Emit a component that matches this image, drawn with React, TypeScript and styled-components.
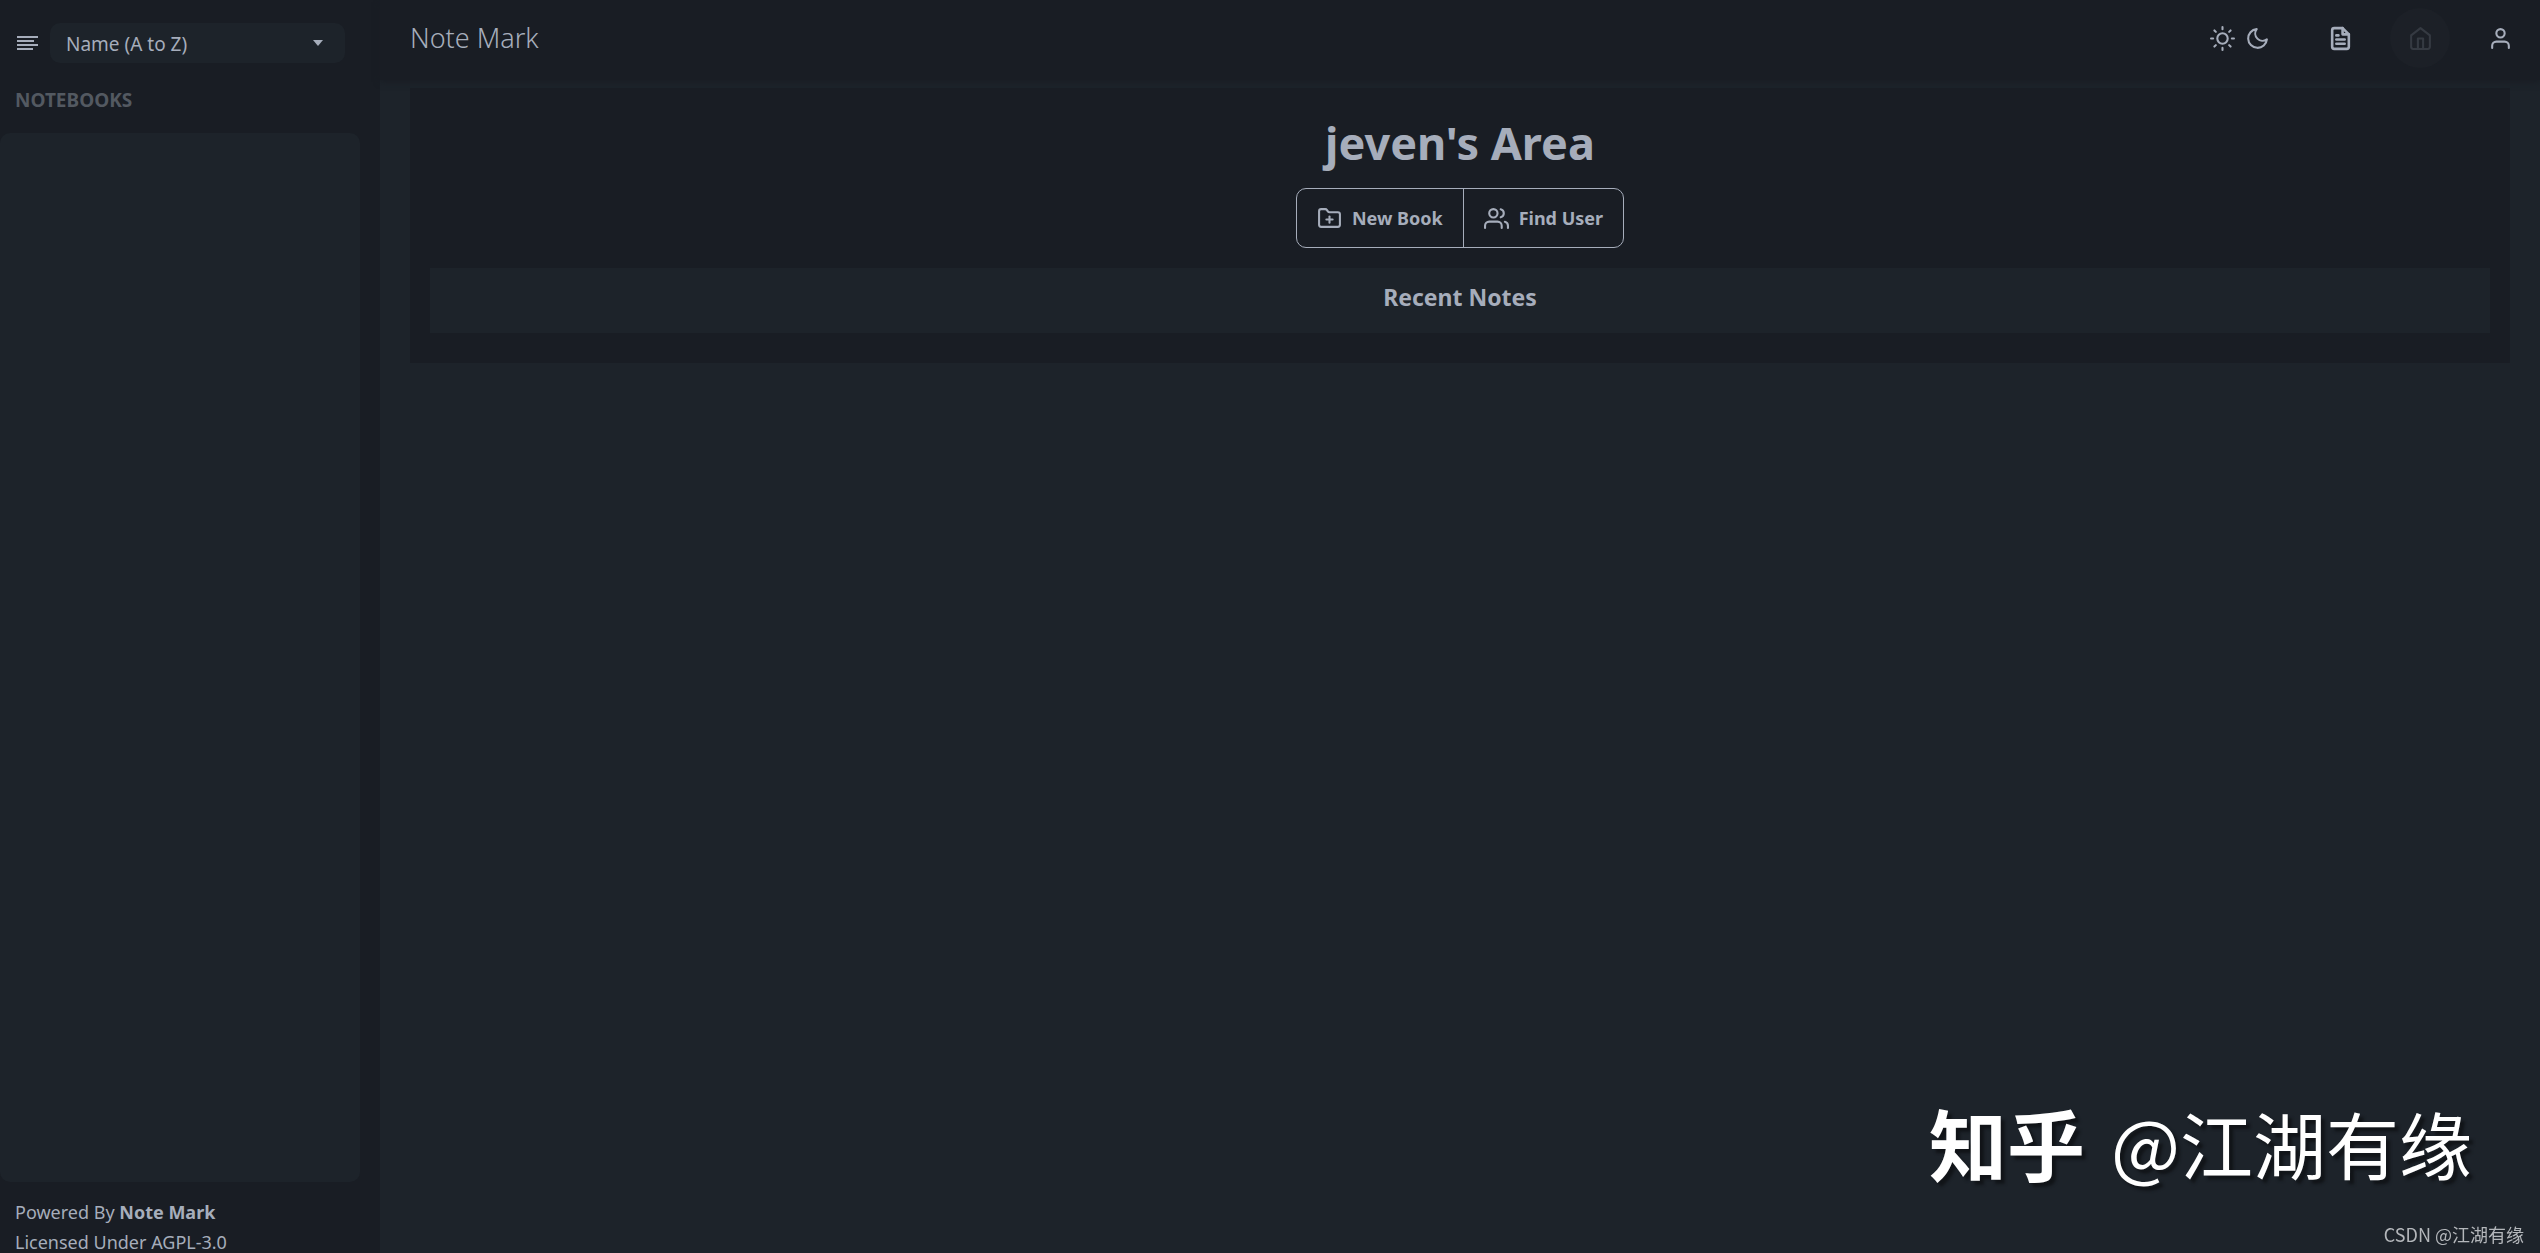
import React from "react";
import styled, { createGlobalStyle } from "styled-components";
import { FiSun, FiMoon, FiFileText, FiUser, FiUsers } from "react-icons/fi";
import { FolderPlus } from "lucide-react";

const sans = `"Noto Sans", "Noto Sans CJK SC", sans-serif`;

const GlobalStyle = createGlobalStyle`
  *, *::before, *::after { box-sizing: border-box; }
  body { margin: 0; background: #1d232a; color: #a6adbb; font-family: ${sans}; font-size: 18px; line-height: 30px; }
  button, select { font: inherit; color: inherit; }
  h1, h2, p { margin: 0; }
`;

const Layout = styled.div`
  display: grid;
  grid-template-columns: 380px 1fr;
  height: 100vh;
  overflow: hidden;
`;

const Sidebar = styled.aside`
  display: flex;
  flex-direction: column;
  background: #191d24;
  padding-right: 20px;
  min-height: 0;
`;

const SortRow = styled.div`
  display: flex;
  align-items: center;
  gap: 10px;
  padding: 23px 15px 0;
`;

const SortLabel = styled.label`
  display: flex;
`;

const SelectWrap = styled.div`
  display: grid;
  flex: 1;
  align-items: center;
  background: #1d232a;
  border-radius: 10px;
  & > * { grid-area: 1 / 1; }
  & > svg { justify-self: end; margin-right: 22px; pointer-events: none; }
`;

const Select = styled.select`
  appearance: none;
  width: 100%;
  height: 40px;
  padding: 2px 40px 0 16px;
  border: 0;
  border-radius: 10px;
  background: transparent;
  font-size: 19px;
`;

const SectionTitle = styled.h2`
  padding: 22px 15px 18px;
  font-size: 19px;
  line-height: 30px;
  font-weight: 700;
  color: #535961;
`;

const BookList = styled.div`
  flex: 1;
  background: #1d232a;
  border-radius: 10px;
`;

const Credits = styled.footer`
  padding: 15px 15px 0;
  height: 71px;
  white-space: nowrap;
`;

const Main = styled.main`
  min-width: 0;
`;

const Header = styled.header`
  display: flex;
  align-items: center;
  justify-content: space-between;
  height: 80px;
  padding: 0 10px 4px 30px;
  background: #191d24;
  box-shadow: 0 2px 6px #191d24;
`;

const Brand = styled.span`
  font-size: 27px;
  font-weight: 300;
`;

const Actions = styled.nav`
  display: flex;
  align-items: center;
  gap: 20px;
`;

const IconButton = styled.button<{ $wide?: boolean }>`
  display: flex;
  align-items: center;
  justify-content: center;
  gap: 10px;
  width: ${(p) => (p.$wide ? 100 : 60)}px;
  height: 60px;
  padding: 0;
  border: 0;
  border-radius: 30px;
  background: transparent;
  &:disabled { background: #1c2027; color: #353a42; }
`;

const Panel = styled.section`
  display: flex;
  flex-direction: column;
  align-items: center;
  margin: 8px 30px 0;
  padding: 25px 20px 30px;
  background: #191d24;
`;

const AreaTitle = styled.h1`
  font-size: 45px;
  line-height: 60px;
  font-weight: 700;
`;

const ButtonGroup = styled.div`
  display: flex;
  margin: 15px 0 20px;
  border: 1px solid #a6adbb;
  border-radius: 10px;
`;

const GroupButton = styled.button`
  display: flex;
  align-items: center;
  gap: 10px;
  height: 58px;
  padding: 0 20px;
  border: 0;
  background: transparent;
  font-weight: 700;
  & + & { border-left: 1px solid #a6adbb; }
`;

const Recent = styled.div`
  align-self: stretch;
  height: 65px;
  padding-top: 14px;
  background: #1d232a;
  text-align: center;
`;

const RecentTitle = styled.h2`
  font-size: 23px;
  line-height: 30px;
  font-weight: 700;
`;

const Watermark = styled.div`
  position: fixed;
  right: 68px;
  bottom: 66px;
  display: flex;
  align-items: center;
  gap: 26px;
  color: #fff;
  font-family: "Noto Sans CJK SC", sans-serif;
  font-size: 73px;
  line-height: 90px;
  text-shadow: 4px 4px 3px #111418;
  & > strong { font-size: 78px; }
`;

const Credit = styled.div`
  position: fixed;
  right: 16px;
  bottom: 4px;
  color: #b4b7bb;
  font-family: "Noto Sans CJK SC", sans-serif;
  font-size: 18px;
  line-height: 30px;
`;

const HomeIcon = () => (
  <svg width="25" height="25" viewBox="0 0 24 24" fill="none" stroke="currentColor" strokeWidth="2" strokeLinejoin="round">
    <path d="M3 9l9-7 9 7v11a2 2 0 0 1-2 2H5a2 2 0 0 1-2-2z" />
    <path d="M9.5 22V12h5v10" />
  </svg>
);

export default function App() {
  return (
    <>
      <GlobalStyle />
      <Layout>
        <Sidebar>
          <SortRow>
            <SortLabel htmlFor="sort" aria-label="Sort notebooks">
              <svg width="25" height="24" viewBox="0 0 25 24" fill="none" stroke="currentColor" strokeWidth="2">
                <path d="M2 6h21M2 10h17M2 14h21M2 18h16" />
              </svg>
            </SortLabel>
            <SelectWrap>
              <Select id="sort" defaultValue="az">
                <option value="az">Name (A to Z)</option>
                <option value="za">Name (Z to A)</option>
              </Select>
              <svg width="10" height="6" viewBox="0 0 10 6" fill="currentColor"><path d="M0 0h10L5 6z" /></svg>
            </SelectWrap>
          </SortRow>
          <SectionTitle>NOTEBOOKS</SectionTitle>
          <BookList />
          <Credits>
            <p>Powered By <strong>Note Mark</strong></p>
            <p>Licensed Under AGPL-3.0</p>
          </Credits>
        </Sidebar>
        <Main>
          <Header>
            <Brand>Note Mark</Brand>
            <Actions>
              <IconButton $wide aria-label="Toggle theme"><FiSun size={25} /><FiMoon size={25} /></IconButton>
              <IconButton aria-label="Notes"><FiFileText size={25} strokeWidth={2.5} /></IconButton>
              <IconButton disabled aria-label="Home"><HomeIcon /></IconButton>
              <IconButton aria-label="Account"><FiUser size={25} /></IconButton>
            </Actions>
          </Header>
          <Panel>
            <AreaTitle>jeven's Area</AreaTitle>
            <ButtonGroup>
              <GroupButton><FolderPlus size={25} />New Book</GroupButton>
              <GroupButton><FiUsers size={25} />Find User</GroupButton>
            </ButtonGroup>
            <Recent><RecentTitle>Recent Notes</RecentTitle></Recent>
          </Panel>
        </Main>
      </Layout>
      <Watermark><strong>知乎</strong><span>@江湖有缘</span></Watermark>
      <Credit>CSDN @江湖有缘</Credit>
    </>
  );
}
